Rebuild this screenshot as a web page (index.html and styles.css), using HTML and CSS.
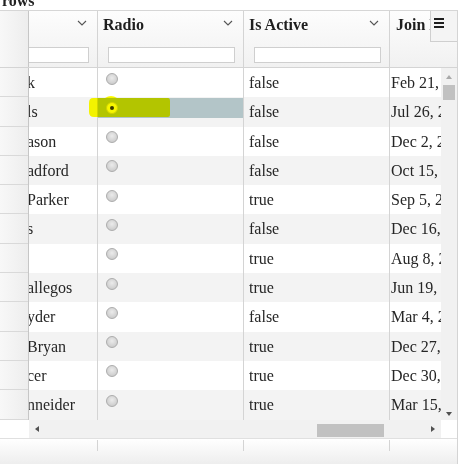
FILE: index.html
```html
<!DOCTYPE html>
<html>
<head>
<meta charset="utf-8">
<link rel="stylesheet" href="styles.css">
</head>
<body>
<div class="caption"><div class="caption-text">rows</div></div>
<div class="grid">
  <div class="header">
    <div class="hcell pin"></div>
    <div class="hcell name">
      <div class="htop"><span class="label"></span><svg class="chev" viewBox="0 0 10 18"><path d="M1 5 L5 9 L9 5"/></svg></div>
      <div class="filter"></div>
    </div>
    <div class="hcell">
      <div class="htop"><span class="label">Radio</span><svg class="chev" viewBox="0 0 10 18"><path d="M1 5 L5 9 L9 5"/></svg></div>
      <div class="filter"></div>
    </div>
    <div class="hcell">
      <div class="htop"><span class="label">Is Active</span><svg class="chev" viewBox="0 0 10 18"><path d="M1 5 L5 9 L9 5"/></svg></div>
      <div class="filter"></div>
    </div>
    <div class="hcell join">
      <div class="htop"><span class="label">Join Date</span></div>
    </div>
    <div class="menu-btn"><svg class="menu-icon" viewBox="0 0 10 10"><rect x="0" y="0" width="10" height="2"/><rect x="0" y="4" width="10" height="2"/><rect x="0" y="8" width="10" height="2"/></svg></div>
  </div>

  <div class="body">
    <div class="pin-col">
      <div class="pin-cell"></div><div class="pin-cell"></div><div class="pin-cell"></div><div class="pin-cell"></div>
      <div class="pin-cell"></div><div class="pin-cell"></div><div class="pin-cell"></div><div class="pin-cell"></div>
      <div class="pin-cell"></div><div class="pin-cell"></div><div class="pin-cell"></div><div class="pin-cell"></div>
    </div>
    <div class="viewport">
      <div class="row"><div class="cell name">k</div><div class="cell radio"><div class="radio-wrap"><span class="radio-dot"></span></div></div><div class="cell active">false</div><div class="cell date">Feb 21, 2014</div></div>
      <div class="row selected"><div class="cell name">ls</div><div class="cell radio"><div class="radio-wrap"><span class="radio-dot on"></span></div></div><div class="cell active">false</div><div class="cell date">Jul 26, 2014</div></div>
      <div class="row"><div class="cell name">ason</div><div class="cell radio"><div class="radio-wrap"><span class="radio-dot"></span></div></div><div class="cell active">false</div><div class="cell date">Dec 2, 2014</div></div>
      <div class="row"><div class="cell name">adford</div><div class="cell radio"><div class="radio-wrap"><span class="radio-dot"></span></div></div><div class="cell active">false</div><div class="cell date">Oct 15, 2014</div></div>
      <div class="row"><div class="cell name">Parker</div><div class="cell radio"><div class="radio-wrap"><span class="radio-dot"></span></div></div><div class="cell active">true</div><div class="cell date">Sep 5, 2014</div></div>
      <div class="row"><div class="cell name">s</div><div class="cell radio"><div class="radio-wrap"><span class="radio-dot"></span></div></div><div class="cell active">false</div><div class="cell date">Dec 16, 2014</div></div>
      <div class="row"><div class="cell name"></div><div class="cell radio"><div class="radio-wrap"><span class="radio-dot"></span></div></div><div class="cell active">true</div><div class="cell date">Aug 8, 2014</div></div>
      <div class="row"><div class="cell name">allegos</div><div class="cell radio"><div class="radio-wrap"><span class="radio-dot"></span></div></div><div class="cell active">true</div><div class="cell date">Jun 19, 2014</div></div>
      <div class="row"><div class="cell name">yder</div><div class="cell radio"><div class="radio-wrap"><span class="radio-dot"></span></div></div><div class="cell active">false</div><div class="cell date">Mar 4, 2014</div></div>
      <div class="row"><div class="cell name">Bryan</div><div class="cell radio"><div class="radio-wrap"><span class="radio-dot"></span></div></div><div class="cell active">true</div><div class="cell date">Dec 27, 2014</div></div>
      <div class="row"><div class="cell name">cer</div><div class="cell radio"><div class="radio-wrap"><span class="radio-dot"></span></div></div><div class="cell active">true</div><div class="cell date">Dec 30, 2014</div></div>
      <div class="row"><div class="cell name">nneider</div><div class="cell radio"><div class="radio-wrap"><span class="radio-dot"></span></div></div><div class="cell active">true</div><div class="cell date">Mar 15, 2014</div></div>
    </div>
    <div class="vscroll">
      <div class="vbtn"><span class="tri-up"></span></div>
      <div class="vthumb"></div>
      <div class="vspacer"></div>
      <div class="vbtn down"><span class="tri-down"></span></div>
    </div>
    <svg class="highlighter" width="86" height="25" viewBox="0 0 86 25"><path d="M7 3 H19 Q25 -1 31 3 H82 Q84 3 84 6 V20 Q84 22 82 22 H8 Q3 22 3 17 V8 Q3 3 7 3 Z"/></svg>
  </div>

  <div class="hrow">
    <div class="hpin"></div>
    <div class="hscroll">
      <div class="hbtn"><span class="tri-left"></span></div>
      <div class="hthumb"></div>
      <div class="hspacer"></div>
      <div class="hbtn right"><span class="tri-right"></span></div>
    </div>
    <div class="hcorner"></div>
  </div>

  <div class="footer">
    <div class="fcell pin"></div>
    <div class="fcell"></div>
    <div class="fcell"></div>
    <div class="fcell"></div>
    <div class="fcell last"></div>
  </div>
</div>
</body>
</html>
```
FILE: styles.css
```css
* { box-sizing: border-box; }

body {
  margin: 0;
  font-family: "Liberation Serif", "Times New Roman", serif;
  font-size: 16px;
  color: #222;
  background: #fff;
  overflow: hidden;
}

.caption {
  height: 10px;
  overflow: hidden;
  padding-left: 2px;
}
.caption-text {
  font-weight: bold;
  line-height: 18px;
  margin-top: -8.5px;
}

.grid {
  width: 458px;
  border-top: 1px solid #d6d6d6;
  border-right: 1px solid #d4d4d4;
}

/* header */
.header {
  position: relative;
  display: grid;
  grid-template-columns: 29px 69px 146px 146px 1fr;
  height: 57px;
  border-bottom: 1px solid #d4d4d4;
  background: linear-gradient(#fdfdfd, #f1f1f1);
}
.hcell {
  border-right: 1px solid #d4d4d4;
  overflow: hidden;
}
.hcell.pin {
  background: linear-gradient(to right, #f8f8f8, #ededed);
  border-right-color: #c6c6c6;
}
.hcell.join { border-right: none; }
.htop {
  display: flex;
  justify-content: space-between;
  padding: 5px 10px 0 5px;
  height: 23px;
}
.join .htop { padding-left: 6px; }
.label {
  font-weight: bold;
  line-height: 18px;
  white-space: nowrap;
  color: #1e1e1e;
}
.chev {
  width: 10px;
  height: 18px;
  flex: none;
}
.chev path {
  fill: none;
  stroke: #555;
  stroke-width: 1.1;
}
.filter {
  height: 16px;
  margin: 13px 8px 0 10px;
  border: 1px solid #cfcfcf;
  background: #fff;
}
.name .filter { margin-left: -4px; }

.menu-btn {
  position: absolute;
  top: 0;
  right: 0;
  width: 27px;
  height: 31px;
  border-left: 1px solid #cfcfcf;
  border-bottom: 1px solid #cfcfcf;
  background: #f4f4f4;
  padding: 7px 0 0 3px;
}
.menu-icon {
  display: block;
  width: 10px;
  height: 10px;
  fill: #1e1e1e;
}

/* body */
.body {
  position: relative;
  display: flex;
  height: 351.6px;
}
.pin-col {
  width: 29px;
  border-right: 1px solid #c6c6c6;
  background: linear-gradient(to right, #f8f8f8, #ededed);
}
.pin-cell {
  height: 29.3px;
  border-bottom: 1px solid #d9d9d9;
}
.viewport {
  width: 412px;
  overflow: hidden;
}
.row {
  display: grid;
  grid-template-columns: 69px 146px 146px 1fr;
  height: 29.3px;
  background: #fff;
}
.row:nth-child(even) { background: #f3f3f3; }
.cell {
  border-right: 1px solid #d4d4d4;
  padding-top: 6px;
  line-height: 18px;
  white-space: nowrap;
  overflow: hidden;
  color: #262626;
}
.cell.name { text-indent: -2px; }
.cell.active { padding-left: 5px; }
.cell.date { border-right: none; padding-left: 1px; }
.cell.radio { padding-top: 0; }
.radio-wrap {
  height: 20px;
  margin-top: 0.5px;
  padding: 4px 0 0 8px;
}
.selected .radio-wrap { background: #b3c5c8; }
.radio-dot {
  position: relative;
  display: block;
  width: 12px;
  height: 12px;
  border-radius: 50%;
  border: 1px solid #acacac;
  background: radial-gradient(circle at 50% 40%, #ebebeb, #cbcbcb 80%);
}
.radio-dot.on {
  background: #f7f7f7;
  border-color: #d2d2d2;
}
.radio-dot.on::after {
  content: "";
  position: absolute;
  left: 3px;
  top: 3px;
  width: 4px;
  height: 4px;
  border-radius: 50%;
  background: #3a3a3a;
}

.highlighter {
  position: absolute;
  left: 86px;
  top: 27px;
  mix-blend-mode: multiply;
}
.highlighter path { fill: #ffff00; }

/* vertical scrollbar */
.vscroll {
  width: 16px;
  background: #f1f1f1;
  display: flex;
  flex-direction: column;
  align-items: center;
}
.vbtn {
  width: 16px;
  height: 17px;
  display: flex;
  align-items: center;
  justify-content: center;
  flex: none;
}
.vbtn.down { margin-bottom: -3px; }
.tri-up {
  width: 0;
  height: 0;
  border-left: 3px solid transparent;
  border-right: 3px solid transparent;
  border-bottom: 4px solid #a9a9a9;
}
.tri-down {
  width: 0;
  height: 0;
  border-left: 3px solid transparent;
  border-right: 3px solid transparent;
  border-top: 4px solid #505050;
}
.vthumb {
  width: 12px;
  height: 15px;
  background: #c1c1c1;
  flex: none;
}
.vspacer { flex: 1; }

/* horizontal scrollbar */
.hrow {
  display: flex;
  height: 18px;
}
.hpin { width: 29px; background: #fff; }
.hscroll {
  width: 412px;
  background: #f1f1f1;
  display: flex;
}
.hbtn {
  width: 16px;
  display: flex;
  align-items: center;
  justify-content: center;
  flex: none;
}
.hbtn.right { width: 17px; }
.tri-left {
  width: 0;
  height: 0;
  border-top: 3.5px solid transparent;
  border-bottom: 3.5px solid transparent;
  border-right: 4px solid #505050;
}
.tri-right {
  width: 0;
  height: 0;
  border-top: 3.5px solid transparent;
  border-bottom: 3.5px solid transparent;
  border-left: 4px solid #505050;
}
.hthumb {
  margin-left: 272px;
  width: 67px;
  height: 13px;
  align-self: flex-end;
  margin-bottom: 1px;
  background: #c1c1c1;
  flex: none;
}
.hspacer { flex: 1; }
.hcorner { width: 16px; background: #fff; }

/* footer */
.footer {
  display: grid;
  grid-template-columns: 29px 69px 146px 146px 1fr;
  height: 27px;
  border-top: 1px solid #e0e0e0;
  background: linear-gradient(#fff, #ededed);
  align-items: start;
}
.fcell {
  height: 11px;
  margin-top: 1px;
  border-right: 1px solid #d4d4d4;
}
.fcell.pin, .fcell.last { border-right: none; }
```
